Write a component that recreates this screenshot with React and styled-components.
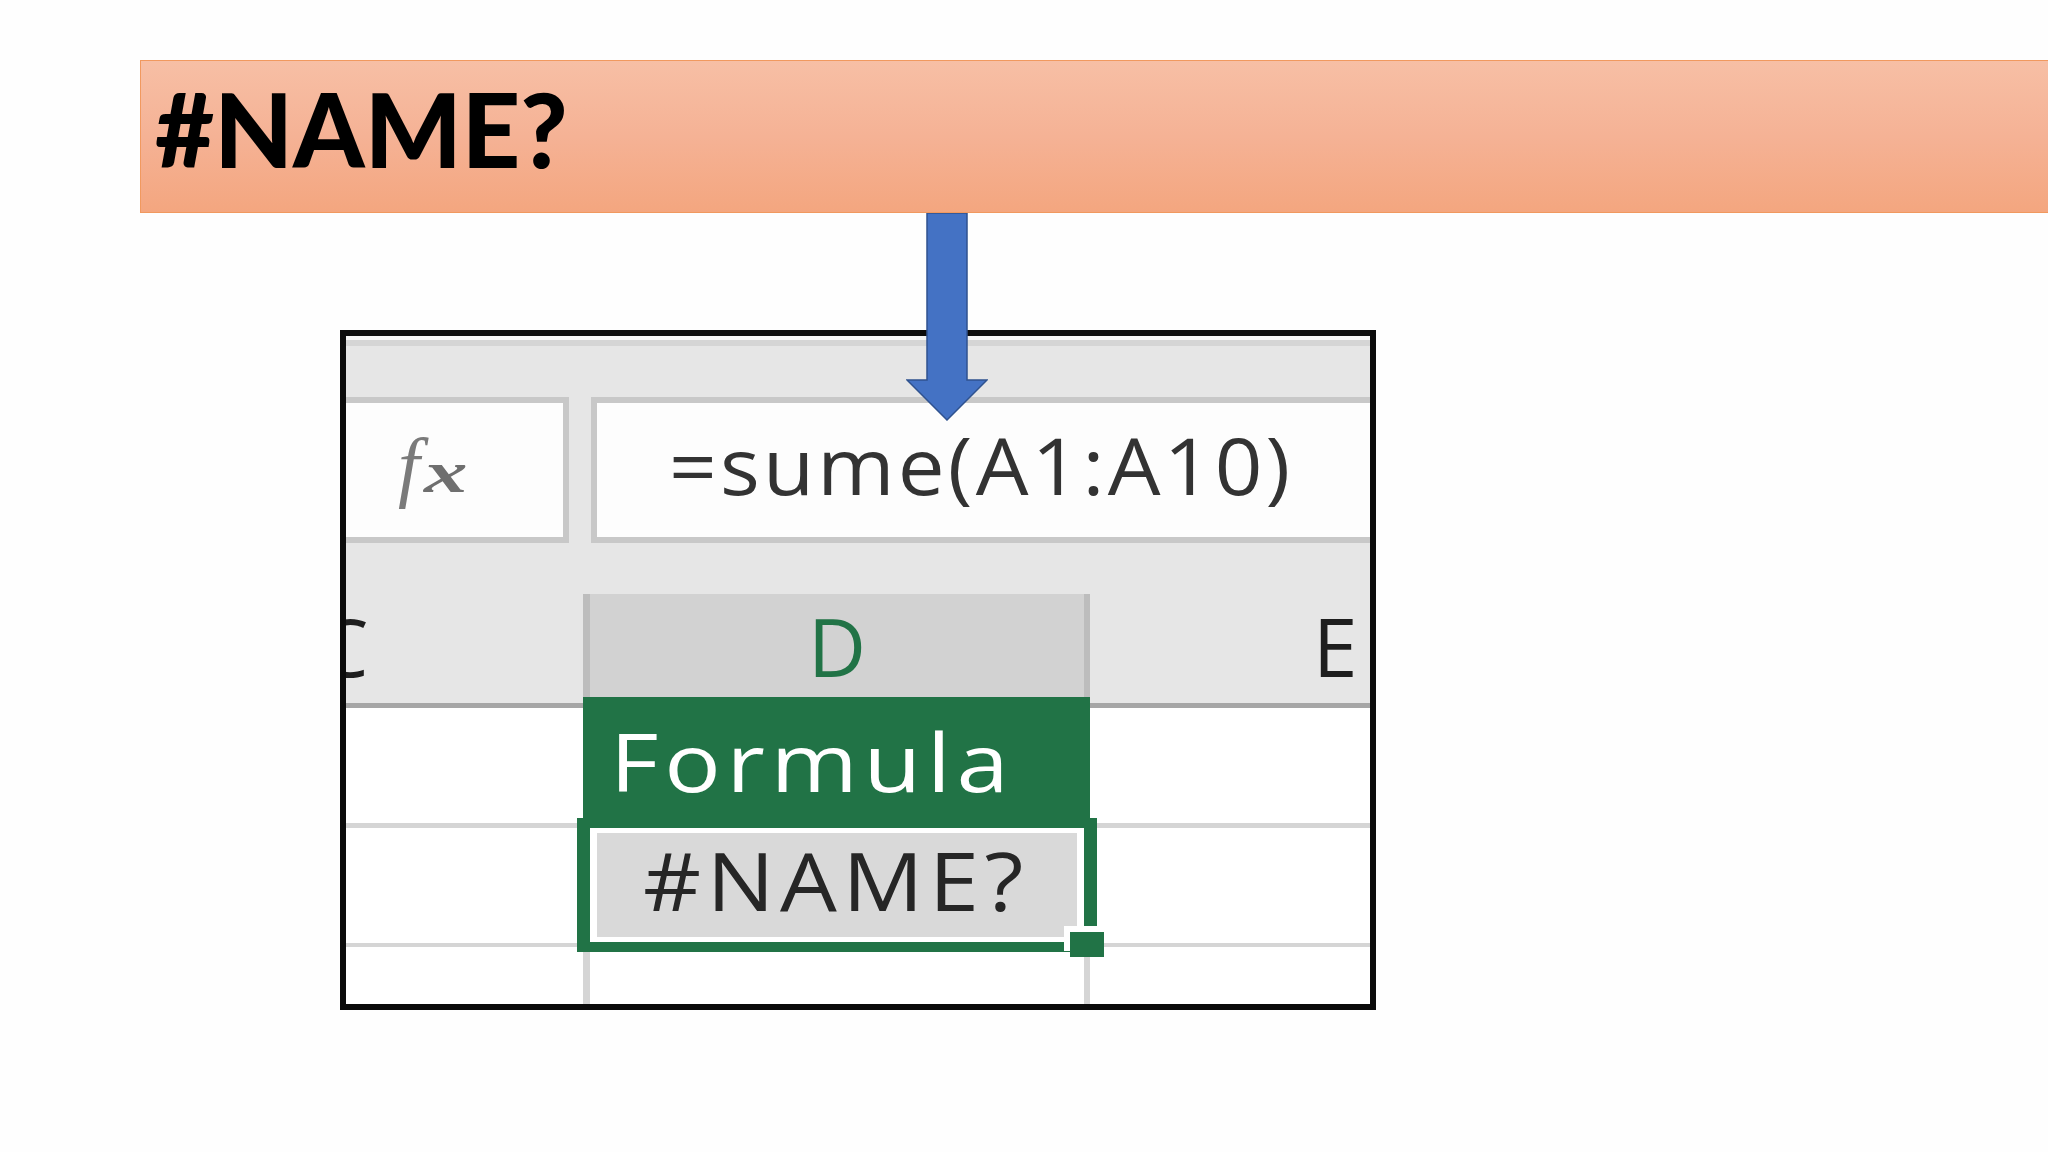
import styled, { createGlobalStyle } from "styled-components";

const GlobalStyle = createGlobalStyle`
  html, body {
    margin: 0;
    padding: 0;
    background: #fefefe;
    overflow: hidden;
  }
`;

const green = "#217346";

export default function App() {
  return (
    <>
      <GlobalStyle />
      <Page>
        <Banner>
          <Title>#NAME?</Title>
        </Banner>
        <Arrow width="82" height="208" viewBox="0 0 82 208">
          <polygon
            points="21,0 61,0 61,167 81,167 41,207 1,167 21,167"
            fill="#4472c4"
            stroke="#2f528f"
            strokeWidth="1.5"
          />
        </Arrow>
        <Frame>
          <Ribbon />
          <FormulaRow>
            <FxBox>
              <Fx>
                f<FxX>x</FxX>
              </Fx>
            </FxBox>
            <FormulaBox>
              <Stretch $x={1.07}>=sume(A1:A10)</Stretch>
            </FormulaBox>
          </FormulaRow>
          <Grid>
            <SideCol width="237px">
              <ColHead>
                <HeadLetter $offset="-28px">C</HeadLetter>
              </ColHead>
              <RowCell $h="120px" $line="5px" />
              <RowCell $h="119px" $line="4px" />
              <RowCell />
            </SideCol>
            <MainCol>
              <HeadSpacer />
              <ActiveHead>
                <HeadLetter $color={green}>D</HeadLetter>
              </ActiveHead>
              <LabelCell>
                <Stretch $x={1.16}>Formula</Stretch>
              </LabelCell>
              <Selection>
                <SelectionFill>
                  <Stretch $x={1.124}>#NAME?</Stretch>
                </SelectionFill>
                <FillHandle />
              </Selection>
              <MainRest />
            </MainCol>
            <SideCol>
              <ColHead>
                <HeadLetter $offset="223px">E</HeadLetter>
              </ColHead>
              <RowCell $h="120px" $line="5px" />
              <RowCell $h="119px" $line="4px" />
              <RowCell />
            </SideCol>
          </Grid>
        </Frame>
      </Page>
    </>
  );
}

const Page = styled.div`
  position: relative;
  width: 2048px;
  height: 1152px;
  display: flex;
  flex-direction: column;
  padding-top: 60px;
  box-sizing: border-box;
`;

const Banner = styled.div`
  margin-left: 140px;
  height: 153px;
  box-sizing: border-box;
  border: 1px solid #f1995f;
  border-right: none;
  background: linear-gradient(180deg, #f7bfa5 0%, #f5b295 50%, #f4a67f 100%);
  padding: 17px 0 0 14px;
`;

const Title = styled.h1`
  margin: 0;
  font-family: Lato, "Open Sans", sans-serif;
  font-weight: 900;
  font-size: 102px;
  line-height: 1;
  color: #000;
`;

const Arrow = styled.svg`
  position: absolute;
  left: 906px;
  top: 213px;
  z-index: 5;
`;

const Frame = styled.div`
  margin: 117px 0 0 340px;
  width: 1036px;
  height: 680px;
  box-sizing: border-box;
  border: 6px solid #0b0b0b;
  display: flex;
  flex-direction: column;
  overflow: hidden;
  background: #fff;
  font-family: "Open Sans", "Noto Sans", sans-serif;
`;

const Ribbon = styled.div`
  height: 61px;
  flex-shrink: 0;
  background: linear-gradient(
    180deg,
    #f4f4f4 0 4px,
    #d5d5d5 4px 10px,
    #e6e6e6 10px
  );
`;

const FormulaRow = styled.div`
  height: 146px;
  flex-shrink: 0;
  display: flex;
  gap: 22px;
  background: #e6e6e6;
`;

const FxBox = styled.div`
  width: 229px;
  margin-left: -6px;
  flex-shrink: 0;
  box-sizing: border-box;
  border: 6px solid #c8c8c8;
  background: #fdfdfd;
  padding: 24px 0 0 52px;
  white-space: nowrap;
`;

const Fx = styled.span`
  font-family: "Liberation Serif", "DejaVu Serif", serif;
  font-style: italic;
  font-size: 78px;
  line-height: 1;
  color: #7a7a7a;
`;

const FxX = styled.span`
  display: inline-block;
  margin-left: 4px;
  font-size: 60px;
  font-weight: 700;
  color: #6f6f6f;
  transform: scaleX(1.45);
  transform-origin: left bottom;
`;

const Stretch = styled.span`
  display: inline-block;
  transform: scaleX(${(p) => p.$x});
  transform-origin: left center;
`;

const FormulaBox = styled.div`
  flex: 1;
  margin-right: -20px;
  box-sizing: border-box;
  border: 6px solid #c8c8c8;
  background: #fdfdfd;
  padding: 23px 0 0 72px;
  font-size: 78px;
  line-height: 78px;
  letter-spacing: 3px;
  color: #333;
  white-space: nowrap;
`;

const Grid = styled.div`
  flex: 1;
  display: flex;
  background: #e6e6e6;
`;

const SideCol = styled.div`
  width: ${(p) => p.width || "auto"};
  flex: ${(p) => (p.width ? "0 0 auto" : "1")};
  display: flex;
  flex-direction: column;
  overflow: hidden;
`;

const ColHead = styled.div`
  height: 165px;
  flex-shrink: 0;
  box-sizing: border-box;
  border-bottom: 5px solid #a6a6a6;
  background: #e6e6e6;
  padding-top: 63px;
  white-space: nowrap;
`;

const HeadLetter = styled.span`
  display: block;
  margin-left: ${(p) => p.$offset || "0"};
  text-align: ${(p) => (p.$offset ? "left" : "center")};
  font-size: 80px;
  line-height: 80px;
  color: ${(p) => p.$color || "#1e1e1e"};
`;

const RowCell = styled.div`
  height: ${(p) => p.$h || "auto"};
  flex: ${(p) => (p.$h ? "0 0 auto" : "1")};
  box-sizing: border-box;
  background: #fff;
  border-bottom: ${(p) => (p.$line ? `${p.$line} solid #d5d5d5` : "none")};
`;

const MainCol = styled.div`
  width: 507px;
  flex-shrink: 0;
  display: flex;
  flex-direction: column;
  position: relative;
  z-index: 1;
`;

const HeadSpacer = styled.div`
  height: 51px;
  flex-shrink: 0;
  background: #e6e6e6;
`;

const ActiveHead = styled.div`
  height: 103px;
  flex-shrink: 0;
  box-sizing: border-box;
  background: #d2d2d2;
  border-left: 7px solid #bdbdbd;
  border-right: 6px solid #bdbdbd;
  padding-top: 12px;
`;

const LabelCell = styled.div`
  height: 121px;
  flex-shrink: 0;
  box-sizing: border-box;
  background: ${green};
  color: #fff;
  padding: 23px 0 0 27px;
  font-size: 81px;
  line-height: 81px;
  letter-spacing: 5px;
  white-space: nowrap;
`;

const Selection = styled.div`
  position: relative;
  height: 134px;
  flex-shrink: 0;
  margin: 0 -7px 0 -6px;
  box-sizing: border-box;
  border-style: solid;
  border-color: ${green};
  border-width: 10px 13px;
  background: #fff;
  padding: 5px 7px;
`;

const SelectionFill = styled.div`
  height: 100%;
  box-sizing: border-box;
  background: #d9d9d9;
  padding: 7px 0 0 46px;
  font-size: 80px;
  line-height: 80px;
  letter-spacing: 5px;
  color: #262626;
  white-space: nowrap;
`;

const FillHandle = styled.div`
  position: absolute;
  right: -20px;
  bottom: -15px;
  width: 34px;
  height: 25px;
  background: ${green};
  box-shadow: -6px -6px 0 0 #fff;
`;

const MainRest = styled.div`
  flex: 1;
  background: #fff;
  border-left: 7px solid #d5d5d5;
  border-right: 6px solid #d5d5d5;
`;
